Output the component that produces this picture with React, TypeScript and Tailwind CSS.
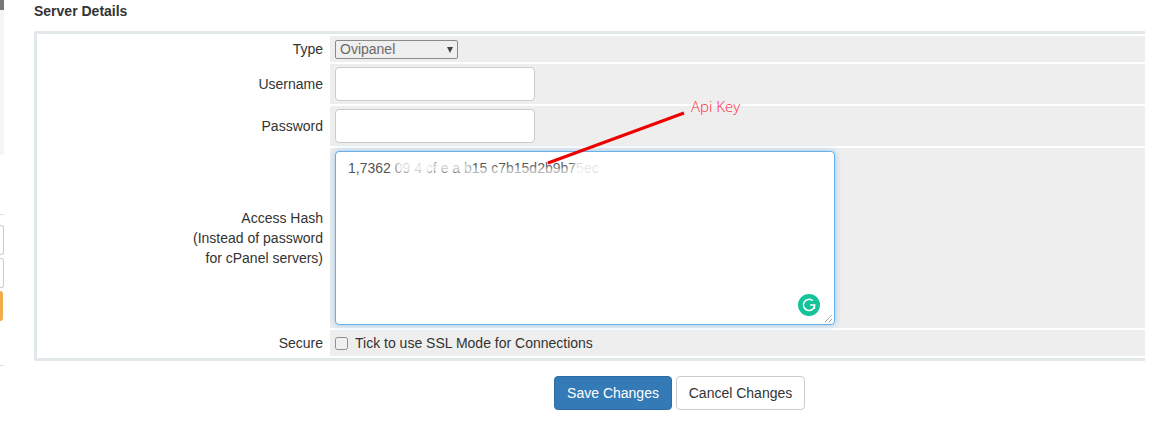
import React from "react";

const rowLabel = "w-[293px] shrink-0 pr-[7px] text-right";

function Row({ label, h, children }: { label: React.ReactNode; h: string; children: React.ReactNode }) {
  return (
    <div className={`flex items-center ${h}`}>
      <div className={rowLabel}>{label}</div>
      <div className={`flex-1 self-stretch bg-[#eeeeee] flex items-center pl-[5px] ${h}`}>{children}</div>
    </div>
  );
}

export default function App() {
  return (
    <div className="relative flex w-[1152px] h-[448px] bg-white overflow-hidden text-[14px] leading-[20px] text-[#333333] font-['Liberation_Sans',Arial,sans-serif]">
      {/* sidebar edge */}
      <div className="w-[4px] shrink-0 flex flex-col">
        <div className="h-[155px] bg-[#f5f5f5]">
          <div className="h-[10px] bg-[#777777]" />
        </div>
        <div className="mt-[59px] h-px bg-[#dddddd]" />
        <div className="mt-[10px] h-[30px] bg-white border border-l-0 border-[#cccccc] rounded-r-[3px]" />
        <div className="mt-[3px] h-[30px] bg-white border border-l-0 border-[#cccccc] rounded-r-[3px]" />
        <div className="mt-[3px] h-[30px] bg-[#f0ad4e] rounded-r-[3px] w-[3px]" />
        <div className="mt-[44px] h-px bg-[#dddddd]" />
      </div>

      <div className="ml-[30px] w-[1111px] flex flex-col">
        <h2 className="h-[31px] pt-[1px] font-bold text-[14px] leading-[20px]">Server Details</h2>
        <div className="border-[3px] border-r-0 border-[#e2e7e9] rounded-l-[3px] h-[330px] pt-[2px] flex flex-col gap-[2px]">
          <Row label="Type" h="h-[26px]">
            <div className="relative w-[123px] h-[19px] bg-[#efefef] border border-[#8a8a8a] rounded-[2px] pl-[4px] text-[14px] leading-[17px] text-[#6a6a6a]">
              Ovipanel
              <span className="absolute right-[4px] top-[6px] w-0 h-0 border-l-[3.5px] border-r-[3.5px] border-t-[6px] border-l-transparent border-r-transparent border-t-[#444444]" />
            </div>
          </Row>
          <Row label="Username" h="h-[40px]">
            <input className="w-[200px] h-[34px] bg-white border border-[#cccccc] rounded-[4px]" />
          </Row>
          <Row label="Password" h="h-[40px]">
            <input type="password" className="w-[200px] h-[34px] bg-white border border-[#cccccc] rounded-[4px]" />
          </Row>
          <Row
            label={
              <>
                Access Hash
                <br />
                (Instead of password
                <br />
                for cPanel servers)
              </>
            }
            h="h-[180px]"
          >
            <div className="relative w-[500px] h-[174px] bg-white border border-[#66afe9] rounded-[4px] shadow-[0_0_6px_rgba(102,175,233,0.6)] px-[12px] py-[6px] text-[#555555]">
              1,7362 09 4 cf e a b15 c7b15d2b9b75ec
              <span className="absolute left-[60px] top-[9px] w-[34px] h-[12px] bg-white/85 blur-[2px]" />
              <span className="absolute left-[88px] top-[10px] w-[46px] h-[10px] bg-white/75 blur-[2px]" />
              <span className="absolute left-[130px] top-[16px] w-[120px] h-[8px] bg-white/60 blur-[2px]" />
              <span className="absolute left-[238px] top-[8px] w-[34px] h-[16px] bg-white/85 blur-[2px]" />
              <span className="absolute right-[14px] bottom-[8px] w-[22px] h-[22px] rounded-full bg-[#15c39a] flex items-center justify-center">
                <svg width="16" height="16" viewBox="0 0 16 16" fill="none" stroke="#ffffff" strokeWidth="1.5">
                  <path d="M11.8 3.8A5.6 5.6 0 1 0 13.6 8H9.2" />
                  <path d="M13.4 8.2V12" />
                </svg>
              </span>
              <svg className="absolute right-[1px] bottom-[1px]" width="9" height="9" viewBox="0 0 9 9" stroke="#555555" strokeWidth="0.8" strokeDasharray="1 0.6">
                <path d="M1 8L8 1M5 8L8 5" />
              </svg>
            </div>
          </Row>
          <Row label="Secure" h="h-[26px]">
            <span className="w-[13px] h-[13px] bg-[#f0f0f0] border border-[#8f8f8f] rounded-[2.5px] shrink-0" />
            <span className="ml-[7px]">Tick to use SSL Mode for Connections</span>
          </Row>
        </div>
        <div className="mt-[15px] pl-[520px] flex gap-[4px]">
          <button className="h-[34px] w-[118px] bg-[#337ab7] border border-[#2e6da4] rounded-[4px] text-white">Save Changes</button>
          <button className="h-[34px] w-[129px] bg-white border border-[#cccccc] rounded-[4px] text-[#333333]">Cancel Changes</button>
        </div>
      </div>

      {/* annotation */}
      <svg className="absolute left-0 top-0 pointer-events-none" width="1152" height="448">
        <line x1="548" y1="163" x2="684" y2="113" stroke="#ee0000" strokeWidth="3" />
      </svg>
      <span className="absolute left-[691px] top-[96px] text-[15px] leading-[20px] text-[#ff2a3a] font-['Open_Sans',sans-serif] font-light">Api Key</span>
    </div>
  );
}
